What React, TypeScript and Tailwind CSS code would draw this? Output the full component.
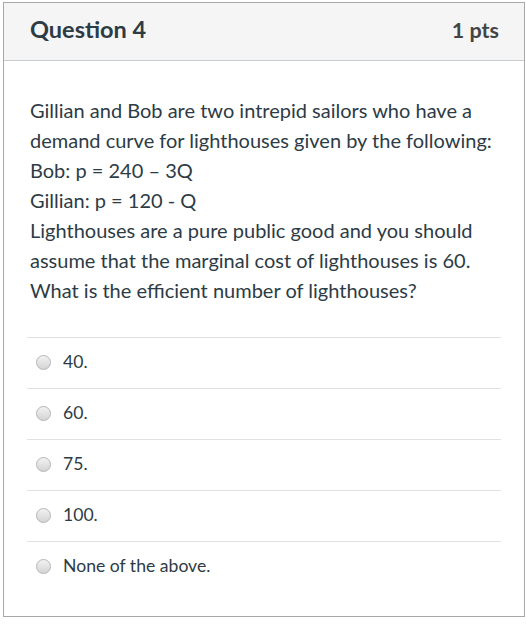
import React from 'react';

const options = ['40.', '60.', '75.', '100.', 'None of the above.'];

function Radio() {
  return (
    <span className="w-[15px] h-[15px] rounded-full border border-[#b5b5b5] bg-gradient-to-b from-[#f2f2f2] to-[#d4d4d4] shrink-0" />
  );
}

export default function App() {
  return (
    <div className="bg-white w-[526px] h-[632px] pt-[2px] pl-[3px]" style={{ fontFamily: 'Lato, "Open Sans", sans-serif' }}>
      <div className="w-[522px] h-[615px] border border-[#a8a8a8] flex flex-col text-[#2d3b45]">
        <div className="h-[58px] bg-[#f5f5f5] border-b border-[#c7cdd1] flex items-center justify-between pl-[26px] pr-[25px] pb-[3px]">
          <span className="text-[23.5px] font-bold">Question 4</span>
          <span className="text-[21.5px] font-bold text-[#444]">1 pts</span>
        </div>
        <div className="pt-[34px] px-[26px] text-[20px] leading-[30px]">
          <p>Gillian and Bob are two intrepid sailors who have a demand curve for lighthouses given by the following:</p>
          <p>Bob: p = 240 – 3Q</p>
          <p>Gillian: p = 120 - Q</p>
          <p>Lighthouses are a pure public good and you should assume that the marginal cost of lighthouses is 60. What is the efficient number of lighthouses?</p>
        </div>
        <div className="mt-[32px] ml-[23px] mr-[23px]">
          {options.map((o) => (
            <div key={o} className="h-[51px] border-t border-[#dfe1e3] flex items-center gap-[12px] pl-[9px] pb-[1px] text-[17.6px]">
              <Radio />
              <span>{o}</span>
            </div>
          ))}
        </div>
      </div>
    </div>
  );
}
